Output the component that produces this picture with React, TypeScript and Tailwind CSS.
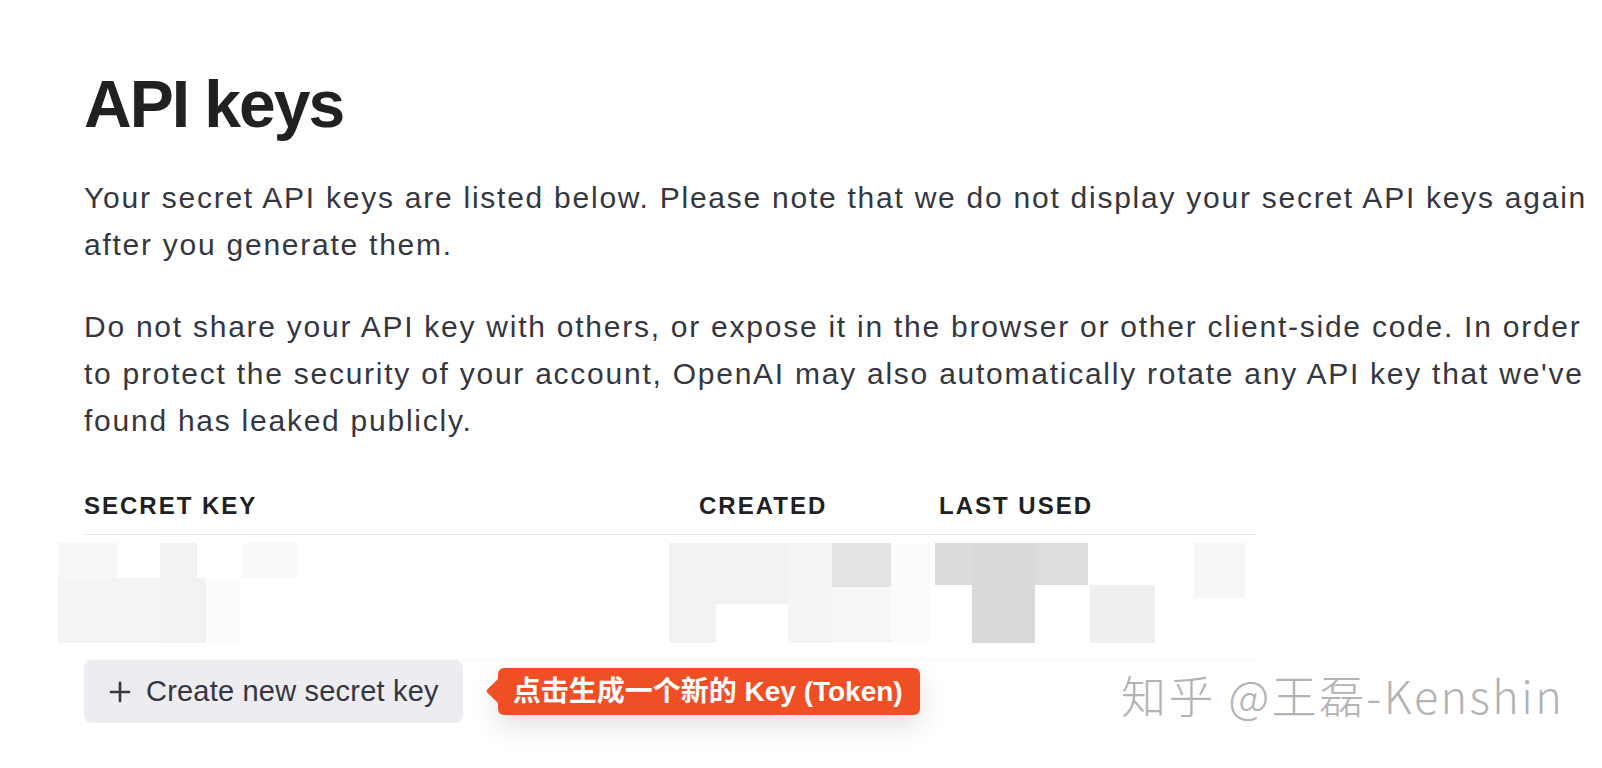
import { Plus } from 'lucide-react';

// mosaic blocks covering the key row, page coordinates
const MOSAIC = [
  { x1: 58, x2: 117, y1: 543, y2: 578, c: '#f7f7f7' },
  { x1: 160, x2: 197, y1: 543, y2: 578, c: '#f2f2f2' },
  { x1: 242, x2: 297, y1: 543, y2: 578, c: '#f9f9f9' },
  { x1: 58, x2: 160, y1: 578, y2: 643, c: '#f4f4f4' },
  { x1: 160, x2: 206, y1: 578, y2: 643, c: '#f2f2f2' },
  { x1: 206, x2: 240, y1: 578, y2: 643, c: '#fcfcfc' },
  { x1: 669, x2: 788, y1: 543, y2: 604, c: '#f2f2f2' },
  { x1: 669, x2: 716, y1: 604, y2: 643, c: '#f2f2f2' },
  { x1: 788, x2: 832, y1: 543, y2: 643, c: '#f5f5f5' },
  { x1: 832, x2: 891, y1: 587, y2: 643, c: '#f6f6f6' },
  { x1: 832, x2: 891, y1: 543, y2: 587, c: '#e3e3e5' },
  { x1: 891, x2: 930, y1: 543, y2: 643, c: '#fbfbfb' },
  { x1: 935, x2: 972, y1: 543, y2: 585, c: '#dcdcdc' },
  { x1: 972, x2: 1035, y1: 543, y2: 643, c: '#d9d9db' },
  { x1: 1035, x2: 1088, y1: 543, y2: 585, c: '#dddddd' },
  { x1: 1090, x2: 1155, y1: 585, y2: 643, c: '#efefef' },
  { x1: 1194, x2: 1245, y1: 543, y2: 598, c: '#f6f6f7' },
];

const ROW_LEFT = 84;
const ROW_TOP = 535;

export default function App() {
  return (
    <div className="relative h-[768px] w-full overflow-hidden bg-white font-['Liberation_Sans','Noto_Sans_CJK_SC',sans-serif] text-[#353740]">
      <div className="pl-[84px] pt-[71px]">
        {/* Title */}
        <h1 className="text-[66px] font-bold leading-none tracking-[-2px] text-[#202123]">API keys</h1>

        {/* Intro text */}
        <div className="w-[1516px] text-[30px] leading-[47px] tracking-[1.75px]">
          <p className="mt-[37px]">
            Your secret API keys are listed below. Please note that we do not display your secret API keys again after you generate them.
          </p>
          <p className="mt-[35px]">
            Do not share your API key with others, or expose it in the browser or other client-side code. In order to protect the security of your account, OpenAI may also automatically rotate any API key that we've found has leaked publicly.
          </p>
        </div>

        {/* Keys table */}
        <div className="mt-[50px] w-[1171px]">
          <div className="flex border-b border-[#e5e5e5] pb-[16px] text-[24px] font-bold leading-6 tracking-[2px] text-[#202123]">
            <div className="w-[615px]">SECRET KEY</div>
            <div className="w-[240px]">CREATED</div>
            <div className="flex-1">LAST USED</div>
          </div>
          <div className="relative h-[125px] border-b border-[#f8f8f8]">
            {MOSAIC.map((b, i) => (
              <div
                key={i}
                className="absolute"
                style={{
                  left: b.x1 - ROW_LEFT,
                  top: b.y1 - ROW_TOP,
                  width: b.x2 - b.x1,
                  height: b.y2 - b.y1,
                  background: b.c,
                }}
              />
            ))}
          </div>
        </div>

        {/* Create button + annotation */}
        <div className="flex items-center">
          <button className="flex h-[63px] items-center gap-[14px] rounded-lg bg-[#ececf1] pl-[24px] pr-[24px] text-[29px] tracking-[0.2px] text-[#353740]">
            <Plus size={24} strokeWidth={2} className="scale-[1.3]" />
            <span>Create new secret key</span>
          </button>

          <div className="relative ml-[35px] flex h-[47px] items-center rounded-md bg-[#f04e25] pl-[15px] pr-[17px] text-[28px] font-bold text-white shadow-[0_10px_28px_rgba(0,0,0,0.13)]">
            <svg className="absolute -left-[12px] top-[10px]" width="13" height="26" viewBox="0 0 13 26">
              <path d="M13 0 L1.2 11.6 Q0 13 1.2 14.4 L13 26 Z" fill="#f04e25" />
            </svg>
            点击生成一个新的 Key (Token)
          </div>
        </div>
      </div>

      {/* Watermark */}
      <div className="absolute left-[1121px] top-[672px] font-['Noto_Sans_CJK_SC',sans-serif] text-[45px] font-light leading-none tracking-[2.4px] text-[#b3b3b3] [text-shadow:0_0_1px_#fff]">
        知乎 @王磊-Kenshin
      </div>
    </div>
  );
}
